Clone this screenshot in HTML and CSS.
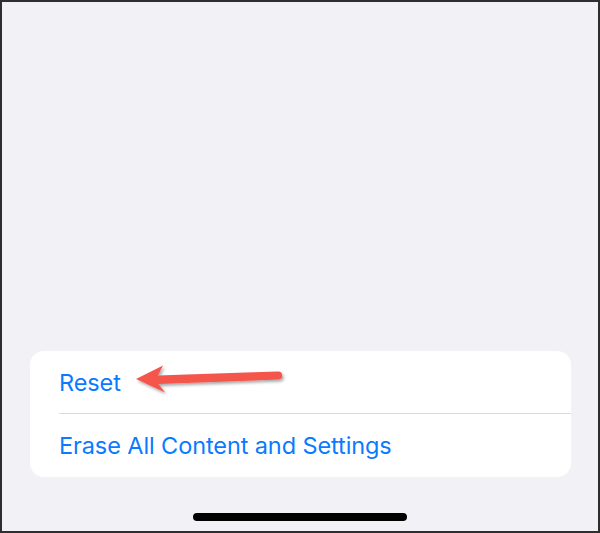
FILE: index.html
```html
<!DOCTYPE html>
<html>
<head>
<meta charset="utf-8">
<link rel="stylesheet" href="styles.css">
</head>
<body>
<div class="screen">
  <div class="card">
    <div class="row first">
      <span class="label">Reset</span>
      <svg class="arrow" width="170" height="40" viewBox="0 0 170 40">
        <defs>
          <filter id="sh" x="-10%" y="-30%" width="120%" height="160%">
            <feDropShadow dx="1.5" dy="2" stdDeviation="1.5" flood-color="#000" flood-opacity="0.35"/>
          </filter>
        </defs>
        <g filter="url(#sh)" fill="#f4564b">
          <path d="M 4 20 L 31 6.5 L 26 16.5 L 146 12.5 A 4 4 0 0 1 146.3 20.5 L 26.5 25 L 33 33.5 Z"/>
        </g>
      </svg>
    </div>
    <div class="divider"></div>
    <div class="row">
      <span class="label">Erase All Content and Settings</span>
    </div>
  </div>
  <div class="homebar"></div>
</div>
</body>
</html>
```

FILE: styles.css
```css
html, body {
  margin: 0;
  padding: 0;
}
body {
  width: 600px;
  height: 533px;
  overflow: hidden;
}
.screen {
  box-sizing: border-box;
  width: 600px;
  height: 533px;
  border: 2px solid #2e2e2e;
  background: #f2f1f6;
  padding-top: 349px;
  display: flex;
  flex-direction: column;
  align-items: flex-start;
}
.card {
  margin-left: 28px;
  width: 541px;
  background: #ffffff;
  border-radius: 14px;
  display: flex;
  flex-direction: column;
}
.row {
  position: relative;
  height: 62px;
  padding-left: 29px;
  display: flex;
  align-items: center;
}
.row + .divider + .row {
  height: 63px;
}
.label {
  font-family: Inter, "Noto Sans", sans-serif;
  font-size: 23.5px;
  color: #0a7aff;
  letter-spacing: -0.1px;
}
.divider {
  height: 1px;
  margin-left: 29px;
  background: #dcdce0;
}
.arrow {
  position: absolute;
  left: 102px;
  top: 8px;
}
.homebar {
  margin-top: 36px;
  margin-left: 191px;
  width: 214px;
  height: 8px;
  border-radius: 4px;
  background: #000;
}
```
